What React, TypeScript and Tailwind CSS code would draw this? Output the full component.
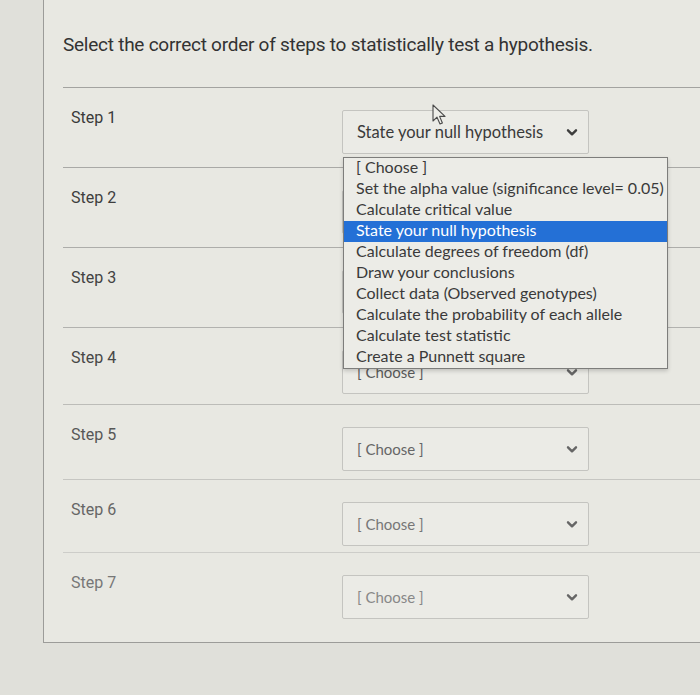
import { Fragment } from "react";

type StepRow = {
  label: string;
  value: string;
  open?: boolean;
  height: string;
  labelTone: string;
  valueTone: string;
  lineTone: string;
};

const OPTIONS = [
  "[ Choose ]",
  "Set the alpha value (significance level= 0.05)",
  "Calculate critical value",
  "State your null hypothesis",
  "Calculate degrees of freedom (df)",
  "Draw your conclusions",
  "Collect data (Observed genotypes)",
  "Calculate the probability of each allele",
  "Calculate test statistic",
  "Create a Punnett square",
];

const STEPS: StepRow[] = [
  { label: "Step 1", value: "State your null hypothesis", open: true, height: "h-[80px]", labelTone: "text-[#3a3a3a]", valueTone: "text-[#3a3a3a]", lineTone: "border-[#a9a9a6]" },
  { label: "Step 2", value: "[ Choose ]", height: "h-[80px]", labelTone: "text-[#3e3e3e]", valueTone: "text-[#555]", lineTone: "border-[#adadaa]" },
  { label: "Step 3", value: "[ Choose ]", height: "h-[80px]", labelTone: "text-[#424242]", valueTone: "text-[#555]", lineTone: "border-[#b2b2af]" },
  { label: "Step 4", value: "[ Choose ]", height: "h-[77px]", labelTone: "text-[#474747]", valueTone: "text-[#5a5a5a]", lineTone: "border-[#bcbcb8]" },
  { label: "Step 5", value: "[ Choose ]", height: "h-[75px]", labelTone: "text-[#575757]", valueTone: "text-[#666]", lineTone: "border-[#c6c6c2]" },
  { label: "Step 6", value: "[ Choose ]", height: "h-[73px]", labelTone: "text-[#666]", valueTone: "text-[#777]", lineTone: "border-[#cdcdc9]" },
  { label: "Step 7", value: "[ Choose ]", height: "h-[80px]", labelTone: "text-[#777]", valueTone: "text-[#888]", lineTone: "border-transparent" },
];

function Chevron({ className }: { className?: string }) {
  return (
    <svg viewBox="0 0 12 8" className={className} fill="none" stroke="currentColor" strokeWidth={2.4} strokeLinecap="round" strokeLinejoin="round">
      <polyline points="2,1.8 6,5.8 10,1.8" />
    </svg>
  );
}

function Pointer() {
  return (
    <svg viewBox="0 0 14 22" className="pointer-events-none absolute left-[90px] top-[-6px] z-20 h-[22px] w-[14px]">
      <path d="M1 1 L1 17 L5 13.2 L8 20 L10.4 19 L7.6 12.4 L13 12.4 Z" fill="#eeeee9" stroke="#4a4a4a" strokeWidth={1.1} strokeLinejoin="round" />
    </svg>
  );
}

function Dropdown() {
  return (
    <ul className="absolute left-[1px] top-[47px] z-10 w-[325px] border border-[#7d7d7b] bg-[#ecece7] shadow-[0_2px_4px_rgba(0,0,0,0.18)]">
      {OPTIONS.map((opt) => {
        const active = opt === "State your null hypothesis";
        return (
          <li
            key={opt}
            className={`h-[21px] whitespace-nowrap pl-[12px] text-[16px] leading-[17px] ${
              active ? "bg-[#2470d6] text-white" : "text-[#3a3a3a]"
            }`}
          >
            {opt}
          </li>
        );
      })}
    </ul>
  );
}

function Select({ row }: { row: StepRow }) {
  return (
    <div className="relative mt-[22px] w-[247px]">
      <div className="flex h-[44px] items-center justify-between rounded-[2px] border border-[#c4c4c0] bg-[#ebebe6] pl-[14px] pr-[10px]">
        <span className={`whitespace-nowrap ${row.open ? "text-[16.5px]" : "text-[15px]"} ${row.valueTone}`}>{row.value}</span>
        <Chevron className={`h-[9px] w-[12px] ${row.open ? "text-[#3d3d3d]" : "text-[#666]"}`} />
      </div>
      {row.open ? (
        <Fragment>
          <Pointer />
          <Dropdown />
        </Fragment>
      ) : null}
    </div>
  );
}

export default function App() {
  return (
    <div className="h-[695px] w-[700px] overflow-hidden bg-[#e0e0da] font-['Roboto',sans-serif]">
      <div className="ml-[43px] h-[643px] border-b border-l border-[#9c9c99] bg-[#e8e8e2] pl-[19px]">
        <h1 className="pt-[32px] text-[19px] leading-[26px] tracking-[-0.25px] text-[#333]">
          Select the correct order of steps to statistically test a hypothesis.
        </h1>
        <div className="mt-[29px] border-t border-[#a3a3a0]" />

        <div className="font-['Lato',sans-serif]">
          {STEPS.map((row) => (
            <div key={row.label} className={`flex ${row.height} border-b ${row.lineTone}`}>
              <div className={`w-[279px] pl-[8px] pt-[20px] font-['Roboto',sans-serif] text-[16px] leading-[20px] ${row.labelTone}`}>
                {row.label}
              </div>
              <Select row={row} />
            </div>
          ))}
        </div>
      </div>
    </div>
  );
}
